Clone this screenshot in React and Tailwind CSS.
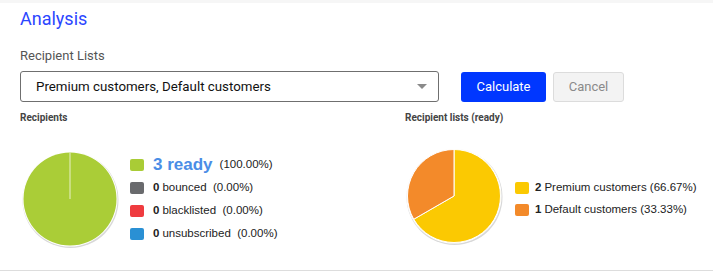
import React from "react";

function Pie({ slices }) {
  const cx = 50, cy = 50, r = 46.5;
  let acc = 0;
  const total = slices.reduce((s, x) => s + x.v, 0);
  const paths = slices.map((s, i) => {
    const a0 = (acc / total) * Math.PI * 2;
    acc += s.v;
    const a1 = (acc / total) * Math.PI * 2;
    if (s.v === total) {
      return (
        <g key={i}>
          <circle cx={cx} cy={cy} r={r} fill={s.c} />
          <line x1={cx} y1={cy} x2={cx} y2={cy - r} stroke="#e8f0c8" strokeWidth="1" />
        </g>
      );
    }
    const x0 = cx + r * Math.sin(a0), y0 = cy - r * Math.cos(a0);
    const x1 = cx + r * Math.sin(a1), y1 = cy - r * Math.cos(a1);
    const large = a1 - a0 > Math.PI ? 1 : 0;
    return (
      <path
        key={i}
        d={`M${cx} ${cy} L${x0} ${y0} A${r} ${r} 0 ${large} 1 ${x1} ${y1} Z`}
        fill={s.c}
        stroke="#ffffff"
        strokeWidth="1"
        strokeLinejoin="round"
      />
    );
  });
  return (
    <svg width="100" height="100" viewBox="0 0 100 100" className="shrink-0">
      <circle cx={cx + 0.5} cy={cy + 1} r={r + 1.5} fill="#d8d8d8" />
      <circle cx={cx} cy={cy} r={r + 1} fill="#ffffff" />
      {paths}
    </svg>
  );
}

function Swatch({ color, gap = "mr-[9px]" }) {
  return <span className={`inline-block w-[14px] h-[12px] rounded-[2px] shrink-0 ${gap}`} style={{ backgroundColor: color }} />;
}

export default function App() {
  const arial = { fontFamily: '"Liberation Sans", Arial, sans-serif' };
  return (
    <div className="w-[713px] h-[271px] bg-white overflow-hidden flex flex-col" style={{ fontFamily: 'Roboto, "Noto Sans", sans-serif' }}>
      <div className="h-[3px] bg-[#f6f6f6]" />
      <div className="px-5 flex-1 flex flex-col">
        <h1 className="text-[18px] leading-[24px] text-[#2b46ff] mt-[4px]">Analysis</h1>
        <div className="text-[13px] leading-[16px] text-[#555555] mt-[17px]">Recipient Lists</div>
        <div className="flex items-center mt-[7px]">
          <div className="w-[419px] h-[31px] border border-[#6f6f6f] rounded-[3px] flex items-center pl-[15px] pr-[11px]">
            <span className="flex-1 text-[13.3px] text-[#111111]">Premium customers, Default customers</span>
            <span className="w-0 h-0 border-l-[5px] border-r-[5px] border-t-[5px] border-l-transparent border-r-transparent border-t-[#8a8a8a]" />
          </div>
          <button className="ml-[22px] w-[85px] h-[30px] bg-[#0037ff] text-white text-[13px] rounded-[3px]">Calculate</button>
          <button className="ml-[7px] w-[71px] h-[30px] bg-[#f3f3f3] border border-[#dcdcdc] text-[#8a8a8a] text-[13px] rounded-[3px]">Cancel</button>
        </div>
        <div className="flex mt-[10px]" style={arial}>
          <div className="w-[385px] shrink-0">
            <div className="text-[10px] font-bold text-[#444444] leading-[12px]" style={{ fontFamily: 'Roboto, sans-serif' }}>Recipients</div>
            <div className="flex items-center mt-[25px]">
              <Pie slices={[{ v: 3, c: "#aacd37" }]} />
              <div className="ml-[10px] flex flex-col gap-[7px] text-[11.5px] text-[#222222] whitespace-nowrap">
                <div className="flex items-center h-[16px]">
                  <Swatch color="#a9cc36" />
                  <span className="text-[17px] font-bold text-[#4a8de6] mr-[7px]">3 ready</span>
                  <span>(100.00%)</span>
                </div>
                <div className="flex items-center h-[16px]">
                  <Swatch color="#696a6d" />
                  <b className="mr-[3px]">0</b>bounced&nbsp;&nbsp;(0.00%)
                </div>
                <div className="flex items-center h-[16px]">
                  <Swatch color="#ef3b3f" />
                  <b className="mr-[3px]">0</b>blacklisted&nbsp;&nbsp;(0.00%)
                </div>
                <div className="flex items-center h-[16px]">
                  <Swatch color="#2a90d4" />
                  <b className="mr-[3px]">0</b>unsubscribed&nbsp;&nbsp;(0.00%)
                </div>
              </div>
            </div>
          </div>
          <div className="flex-1">
            <div className="text-[10px] font-bold text-[#444444] leading-[12px]" style={{ fontFamily: 'Roboto, sans-serif' }}>Recipient lists (ready)</div>
            <div className="flex items-center mt-[22px] -ml-[1px]">
              <Pie slices={[{ v: 2, c: "#fbc902" }, { v: 1, c: "#f38a2a" }]} />
              <div className="ml-[11px] mt-[6px] flex flex-col gap-[6px] text-[11.5px] text-[#222222] whitespace-nowrap shrink-0">
                <div className="flex items-center h-[16px]">
                  <Swatch color="#fbc902" gap="mr-[6px]" />
                  <b className="mr-[3px]">2</b>Premium customers (66.67%)
                </div>
                <div className="flex items-center h-[16px]">
                  <Swatch color="#f38a2a" gap="mr-[6px]" />
                  <b className="mr-[3px]">1</b>Default customers (33.33%)
                </div>
              </div>
            </div>
          </div>
        </div>
      </div>
      <div className="h-[1px] bg-[#dddddd]" />
    </div>
  );
}
